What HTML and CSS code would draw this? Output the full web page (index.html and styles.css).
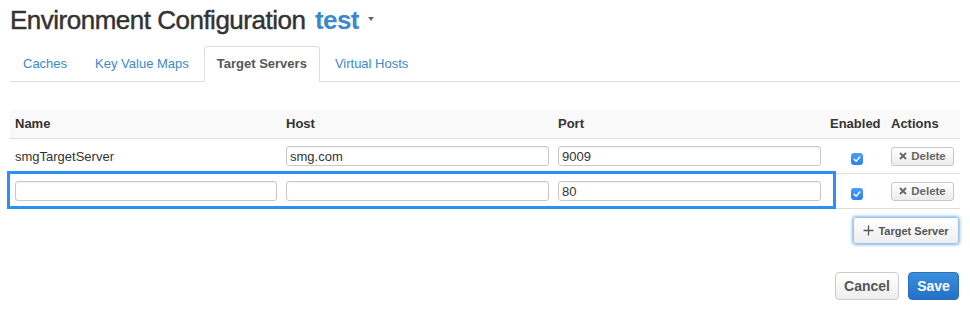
FILE: index.html
```html
<!DOCTYPE html>
<html>
<head>
<meta charset="utf-8">
<link rel="stylesheet" href="styles.css">
</head>
<body>
<div class="page">
  <h1 class="title">Environment Configuration <span class="env">test</span><span class="caret"></span></h1>
  <ul class="tabs">
    <li class="tab"><a>Caches</a></li>
    <li class="tab"><a>Key Value Maps</a></li>
    <li class="tab active"><a>Target Servers</a></li>
    <li class="tab"><a>Virtual Hosts</a></li>
  </ul>
  <table class="grid">
    <colgroup>
      <col class="c-name"><col class="c-host"><col class="c-port"><col class="c-en"><col class="c-act">
    </colgroup>
    <thead>
      <tr><th>Name</th><th>Host</th><th>Port</th><th>Enabled</th><th>Actions</th></tr>
    </thead>
    <tbody>
      <tr>
        <td class="txt">smgTargetServer</td>
        <td class="inp"><input class="field" value="smg.com"></td>
        <td class="inp"><input class="field" value="9009"></td>
        <td class="chk"><span class="checkbox"><svg viewBox="0 0 12 12" width="12" height="12"><path d="M3.2 6.3 L5.1 8.2 L8.8 4" fill="none" stroke="#fff" stroke-width="1.4" stroke-linecap="round" stroke-linejoin="round"/></svg></span></td>
        <td class="act"><button class="btn-del"><svg viewBox="0 0 8 8" width="8" height="8"><path d="M1 1 L7 7 M7 1 L1 7" stroke="#666" stroke-width="1.8"/></svg>Delete</button></td>
      </tr>
      <tr>
        <td class="inp focus-cell"><div class="focus-ring"></div><input class="field" value=""></td>
        <td class="inp"><input class="field" value=""></td>
        <td class="inp"><input class="field" value="80"></td>
        <td class="chk"><span class="checkbox"><svg viewBox="0 0 12 12" width="12" height="12"><path d="M3.2 6.3 L5.1 8.2 L8.8 4" fill="none" stroke="#fff" stroke-width="1.4" stroke-linecap="round" stroke-linejoin="round"/></svg></span></td>
        <td class="act"><button class="btn-del"><svg viewBox="0 0 8 8" width="8" height="8"><path d="M1 1 L7 7 M7 1 L1 7" stroke="#666" stroke-width="1.8"/></svg>Delete</button></td>
      </tr>
    </tbody>
  </table>
  <div class="add-row">
    <button class="btn-add"><svg viewBox="0 0 11 11" width="11" height="11"><path d="M5.5 0.5 V10.5 M0.5 5.5 H10.5" stroke="#555" stroke-width="1.3"/></svg>Target Server</button>
  </div>
  <div class="footer">
    <button class="btn-cancel">Cancel</button>
    <button class="btn-save">Save</button>
  </div>
</div>
</body>
</html>
```
FILE: styles.css
```css
* { box-sizing: border-box; }
html, body { margin: 0; padding: 0; background: #fff; }
body {
  font-family: "Liberation Sans", Arial, sans-serif;
  font-size: 13px;
  color: #333;
}
.page { padding: 0 10px; }

.title {
  margin: 2px 0 0 0;
  font-size: 26px;
  line-height: 36px;
  font-weight: normal;
  color: #333;
  letter-spacing: -0.5px;
  -webkit-text-stroke: 0.45px #333;
}
.env {
  color: #3a89cc;
  font-weight: bold;
  -webkit-text-stroke: 0;
  letter-spacing: -0.6px;
  margin-left: 3px;
}
.caret {
  display: inline-block;
  width: 0; height: 0;
  border-left: 3.5px solid transparent;
  border-right: 3.5px solid transparent;
  border-top: 4px solid #666;
  vertical-align: middle;
  margin-left: 9px;
  position: relative;
  top: -3px;
  -webkit-text-stroke: 0;
}

.tabs {
  list-style: none;
  margin: 8px 0 0 0;
  padding: 0;
  display: flex;
  border-bottom: 1px solid #ddd;
}
.tab { margin-bottom: -1px; margin-right: 2px; }
.tab a {
  display: block;
  padding: 8px 12px;
  line-height: 18px;
  border: 1px solid transparent;
  border-radius: 4px 4px 0 0;
  color: #3a89cc;
}
.tab.active a {
  border-color: #ddd #ddd #fff #ddd;
  background: #fff;
  color: #555;
  font-weight: bold;
}

.grid {
  margin-top: 28px;
  width: 950px;
  border-collapse: collapse;
  table-layout: fixed;
}
.c-name { width: 271px; }
.c-host { width: 272px; }
.c-port { width: 272px; }
.c-en { width: 61px; }
.c-act { width: 74px; }
.grid th {
  background: #f9f9f9;
  text-align: left;
  font-weight: bold;
  padding: 5px 5px;
  line-height: 18px;
  border-bottom: 1px solid #ddd;
  color: #333;
}
.grid td {
  padding: 7px 4px 7px 5px;
  line-height: 18px;
  border-bottom: 1px solid #ddd;
  vertical-align: middle;
}
.grid td.txt { padding-top: 8px; }
.field {
  display: block;
  width: 100%;
  height: 20px;
  border: 1px solid #c8c8c8;
  border-radius: 3px;
  padding: 0 3px;
  font-family: "Liberation Sans", Arial, sans-serif;
  font-size: 13px;
  color: #333;
  background: #fff;
  box-shadow: inset 0 1px 1px rgba(0,0,0,0.05);
  outline: none;
}
.focus-cell { position: relative; }
.focus-ring {
  position: absolute;
  left: -3px;
  top: -3px;
  width: 829px;
  height: 38px;
  border: 3px solid #2b8ff5;
  pointer-events: none;
}
.grid td.chk { text-align: center; padding-left: 0; padding-right: 0; }
.checkbox {
  display: inline-block;
  width: 12px;
  height: 12px;
  border-radius: 3px;
  background: linear-gradient(#4a9cf5, #2c82ea);
  vertical-align: middle;
  position: relative;
  top: 2px;
  left: 1px;
}
.checkbox svg { display: block; }
.grid td.act { padding-left: 5px; }
.btn-del {
  display: inline-flex;
  align-items: center;
  gap: 4px;
  height: 19px;
  width: 63px;
  justify-content: center;
  padding: 0 5px;
  border: 1px solid #c8c8c8;
  border-radius: 3px;
  background: linear-gradient(#fff, #ececec);
  font-family: "Liberation Sans", Arial, sans-serif;
  font-size: 11.5px;
  font-weight: bold;
  color: #666;
}

.add-row {
  display: flex;
  justify-content: flex-end;
  margin-top: 8px;
}
.btn-add {
  display: inline-flex;
  align-items: center;
  gap: 4px;
  height: 27px;
  width: 106px;
  justify-content: center;
  border: 1px solid #9fc4ea;
  border-radius: 3px;
  background: linear-gradient(#fff, #eee);
  box-shadow: 0 0 3px 1px rgba(80,160,240,0.7);
  font-family: "Liberation Sans", Arial, sans-serif;
  font-size: 11px;
  font-weight: bold;
  color: #555;
  margin-right: 1px;
}

.footer {
  display: flex;
  justify-content: flex-end;
  gap: 9px;
  margin-top: 28px;
}
.btn-cancel, .btn-save {
  height: 28px;
  border-radius: 4px;
  font-family: "Liberation Sans", Arial, sans-serif;
  font-size: 14px;
  font-weight: bold;
}
.btn-cancel {
  width: 64px;
  border: 1px solid #ccc;
  background: linear-gradient(#fff, #eee);
  color: #555;
}
.btn-save {
  width: 51px;
  border: 1px solid #2a6fbf;
  background: linear-gradient(#3a8fda, #2470c8);
  color: #fff;
  margin-right: 1px;
}
```
